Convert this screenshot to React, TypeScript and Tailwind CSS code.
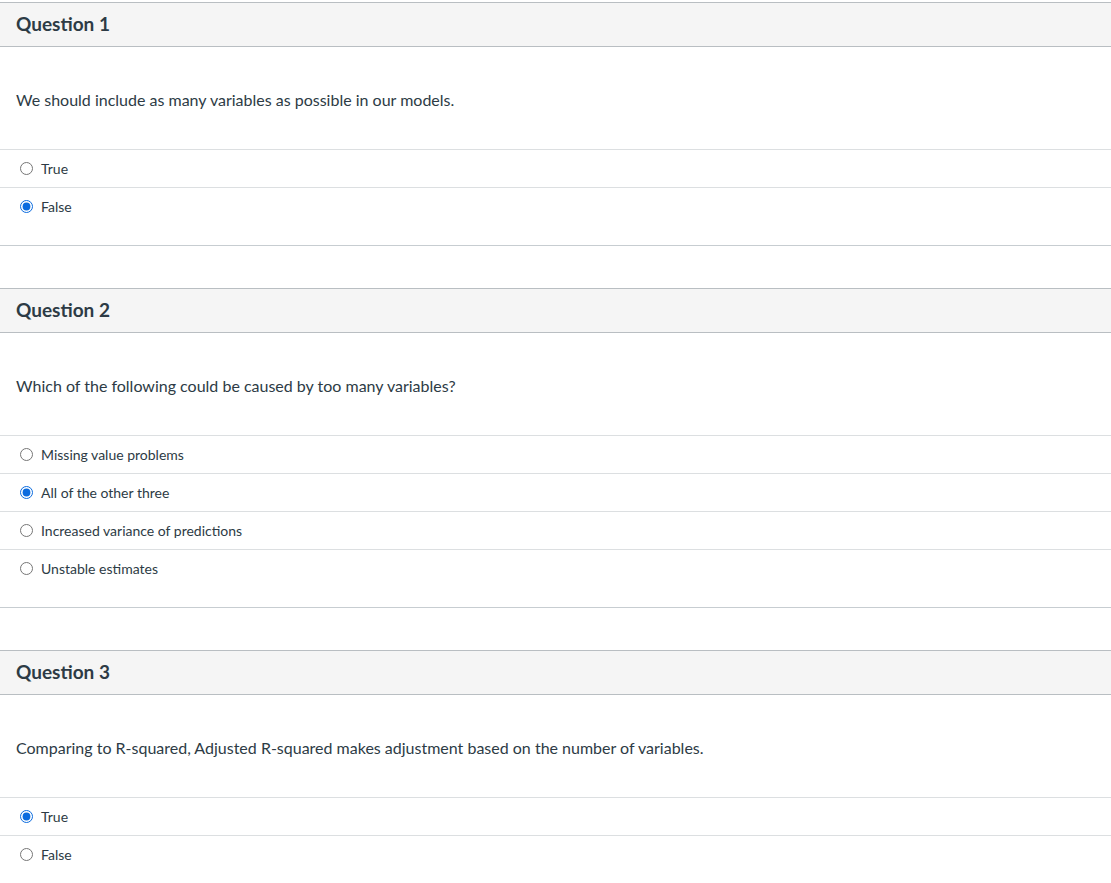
const qs = [
  { t: "Question 1", q: "We should include as many variables as possible in our models.", a: ["True", "False"], s: 1 },
  { t: "Question 2", q: "Which of the following could be caused by too many variables?", a: ["Missing value problems", "All of the other three", "Increased variance of predictions", "Unstable estimates"], s: 1 },
  { t: "Question 3", q: "Comparing to R-squared, Adjusted R-squared makes adjustment based on the number of variables.", a: ["True", "False"], s: 0 },
];

export default function App() {
  return (
    <div className="bg-white pt-[2px] text-[#2d3b45]" style={{ fontFamily: "Lato, 'Liberation Sans', sans-serif" }}>
      {qs.map((q, i) => (
        <div key={i} className="border-t border-b border-[#c7cdd1] border-t-[#b9bec2] mb-[42px]">
          <div className="h-[44px] bg-[#f5f5f5] border-b border-[#b9bec2] flex items-center px-4">
            <span className="text-[19px] font-bold text-[#2d3b45]">{q.t}</span>
          </div>
          <div className="pt-[43px] pb-[39px] px-4 text-[16px] leading-[20px]">{q.q}</div>
          <div className="pb-[20px]">
            {q.a.map((a, j) => (
              <label key={j} className="h-[38px] border-t border-[#dcdfe1] flex items-center pl-[20px] text-[14px]">
                <input type="radio" name={"q" + i} defaultChecked={j === q.s} className="w-[13px] h-[13px] m-0 mr-[8px] accent-[#0b6bde]" />
                {a}
              </label>
            ))}
          </div>
        </div>
      ))}
    </div>
  );
}
